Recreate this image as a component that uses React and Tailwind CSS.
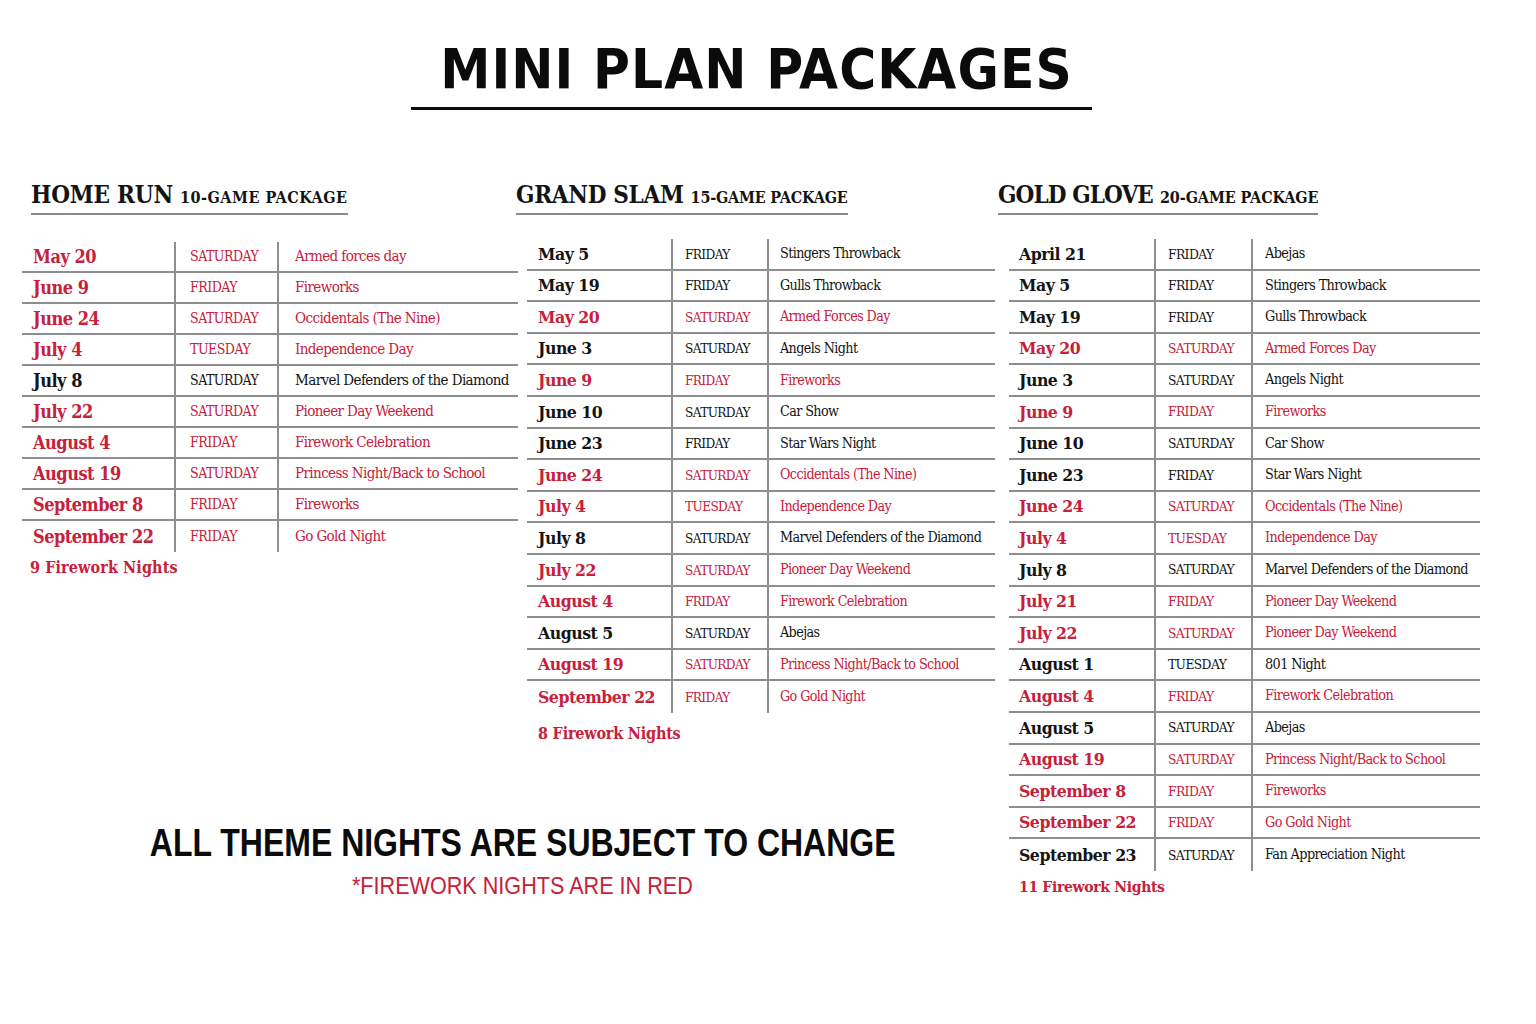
import React from "react";

const R = "r";
const B = "b";

const col1 = [
  ["May 20", "SATURDAY", "Armed forces day", R],
  ["June 9", "FRIDAY", "Fireworks", R],
  ["June 24", "SATURDAY", "Occidentals (The Nine)", R],
  ["July 4", "TUESDAY", "Independence Day", R],
  ["July 8", "SATURDAY", "Marvel Defenders of the Diamond", B],
  ["July 22", "SATURDAY", "Pioneer Day Weekend", R],
  ["August 4", "FRIDAY", "Firework Celebration", R],
  ["August 19", "SATURDAY", "Princess Night/Back to School", R],
  ["September 8", "FRIDAY", "Fireworks", R],
  ["September 22", "FRIDAY", "Go Gold Night", R],
];

const col2 = [
  ["May 5", "FRIDAY", "Stingers Throwback", B],
  ["May 19", "FRIDAY", "Gulls Throwback", B],
  ["May 20", "SATURDAY", "Armed Forces Day", R],
  ["June 3", "SATURDAY", "Angels Night", B],
  ["June 9", "FRIDAY", "Fireworks", R],
  ["June 10", "SATURDAY", "Car Show", B],
  ["June 23", "FRIDAY", "Star Wars Night", B],
  ["June 24", "SATURDAY", "Occidentals (The Nine)", R],
  ["July 4", "TUESDAY", "Independence Day", R],
  ["July 8", "SATURDAY", "Marvel Defenders of the Diamond", B],
  ["July 22", "SATURDAY", "Pioneer Day Weekend", R],
  ["August 4", "FRIDAY", "Firework Celebration", R],
  ["August 5", "SATURDAY", "Abejas", B],
  ["August 19", "SATURDAY", "Princess Night/Back to School", R],
  ["September 22", "FRIDAY", "Go Gold Night", R],
];

const col3 = [
  ["April 21", "FRIDAY", "Abejas", B],
  ["May 5", "FRIDAY", "Stingers Throwback", B],
  ["May 19", "FRIDAY", "Gulls Throwback", B],
  ["May 20", "SATURDAY", "Armed Forces Day", R],
  ["June 3", "SATURDAY", "Angels Night", B],
  ["June 9", "FRIDAY", "Fireworks", R],
  ["June 10", "SATURDAY", "Car Show", B],
  ["June 23", "FRIDAY", "Star Wars Night", B],
  ["June 24", "SATURDAY", "Occidentals (The Nine)", R],
  ["July 4", "TUESDAY", "Independence Day", R],
  ["July 8", "SATURDAY", "Marvel Defenders of the Diamond", B],
  ["July 21", "FRIDAY", "Pioneer Day Weekend", R],
  ["July 22", "SATURDAY", "Pioneer Day Weekend", R],
  ["August 1", "TUESDAY", "801 Night", B],
  ["August 4", "FRIDAY", "Firework Celebration", R],
  ["August 5", "SATURDAY", "Abejas", B],
  ["August 19", "SATURDAY", "Princess Night/Back to School", R],
  ["September 8", "FRIDAY", "Fireworks", R],
  ["September 22", "FRIDAY", "Go Gold Night", R],
  ["September 23", "SATURDAY", "Fan Appreciation Night", B],
];

const slab = "font-['DejaVu_Serif',serif] font-stretch-condensed";

function Heading({ big, small, className, bigTrack, smallTrack }) {
  return (
    <div className={className}>
      <div className={`inline-flex items-baseline gap-[7px] border-b-2 border-[#8a8a8a] pb-[3px] leading-[24px] text-[#141414] ${slab}`}>
        <span className={`text-[24px] font-bold ${bigTrack}`}>{big}</span>
        <span className={`text-[16px] font-bold ${smallTrack}`}>{small}</span>
      </div>
    </div>
  );
}

function Table({ rows, w1, w2, rowH, pl1, pl2, pl3, fDate, fDay, fEvent }) {
  return (
    <div className="flex flex-col">
      {rows.map((r, i) => {
        const color = r[3] === R ? "text-[#c6203a]" : "text-[#141414]";
        const last = i === rows.length - 1;
        return (
          <div
            key={i}
            className={`flex items-center ${last ? "" : "border-b-2 border-[#8e8e8e]"} ${rowH} ${color} ${slab}`}
          >
            <div className={`${w1} ${pl1} shrink-0 h-full flex items-center ${fDate} font-bold tracking-[-0.5px] whitespace-nowrap`}>
              {r[0]}
            </div>
            <div className={`${w2} ${pl2} shrink-0 h-full flex items-center border-l-2 border-[#8e8e8e] ${fDay} whitespace-nowrap`}>
              {r[1]}
            </div>
            <div className={`flex-1 min-w-0 ${pl3} h-full flex items-center border-l-2 border-[#8e8e8e] ${fEvent} whitespace-nowrap`}>
              {r[2]}
            </div>
          </div>
        );
      })}
    </div>
  );
}

function Nights({ children, className }) {
  return (
    <div className={`h-[20px] leading-[20px] font-bold text-[#c6203a] ${slab} ${className}`}>
      {children}
    </div>
  );
}

export default function App() {
  return (
    <div className="w-[1536px] h-[1024px] bg-white pt-[41px] overflow-hidden">
      <div className="ml-[411px] w-[681px] border-b-[3px] border-[#0d0d0d] pb-[10px] pl-[10px] text-center">
        <div className="text-[56px] leading-[56px] font-bold tracking-[1.1px] text-[#0b0b0b] font-['DejaVu_Sans',sans-serif] font-stretch-condensed">
          MINI PLAN PACKAGES
        </div>
      </div>

      <div className="mt-[73px] flex items-start pl-[22px]">
        <div className="flex flex-col">
          <div className="flex items-start">
            <div className="w-[496px] flex flex-col">
              <Heading big="HOME RUN" small="10-GAME PACKAGE" className="ml-[9px]" bigTrack="tracking-[-0.2px]" smallTrack="tracking-[0.5px]" />
              <div className="mt-[27px]">
                <Table
                  rows={col1}
                  w1="w-[152px]"
                  w2="w-[103px]"
                  rowH="h-[31px]"
                  pl1="pl-[11px]"
                  pl2="pl-[14px]"
                  pl3="pl-[16px]"
                  fDate="text-[18px]"
                  fDay="text-[14px] tracking-[-0.5px]"
                  fEvent="text-[15px] tracking-[-0.6px]"
                />
              </div>
              <Nights className="mt-[6px] ml-[8px] text-[16px] tracking-[0.1px]">9 Firework Nights</Nights>
            </div>
            <div className="ml-[9px] w-[468px] flex flex-col">
              <Heading big="GRAND SLAM" small="15-GAME PACKAGE" className="-ml-[11px]" bigTrack="tracking-[-0.3px]" smallTrack="tracking-[-0.2px]" />
              <div className="mt-[24px]">
                <Table
                  rows={col2}
                  w1="w-[144px]"
                  w2="w-[96px]"
                  rowH="h-[31.6px]"
                  pl1="pl-[11px]"
                  pl2="pl-[12px]"
                  pl3="pl-[11px]"
                  fDate="text-[17.5px]"
                  fDay="text-[13.5px] tracking-[-0.6px]"
                  fEvent="text-[14.2px] tracking-[-0.6px]"
                />
              </div>
              <Nights className="mt-[11px] ml-[11px] text-[16px] tracking-[-0.2px]">8 Firework Nights</Nights>
            </div>
          </div>
          <div className="mt-[79px] flex flex-col items-center pl-[28px] font-['Liberation_Sans',Arial,sans-serif]">
            <div className="inline-block scale-x-[0.82] text-[39px] leading-[39px] font-bold text-[#0b0b0b] whitespace-nowrap">
              ALL THEME NIGHTS ARE SUBJECT TO CHANGE
            </div>
            <div className="mt-[11px] inline-block scale-x-[0.9] text-[24px] leading-[25px] text-[#c6203a] whitespace-nowrap">
              *FIREWORK NIGHTS ARE IN RED
            </div>
          </div>
        </div>
        <div className="ml-[14px] w-[471px] flex flex-col">
          <Heading big="GOLD GLOVE" small="20-GAME PACKAGE" className="-ml-[11px]" bigTrack="tracking-[-0.9px]" smallTrack="tracking-[-0.1px]" />
          <div className="mt-[24px]">
            <Table
              rows={col3}
              w1="w-[145px]"
              w2="w-[97px]"
              rowH="h-[31.6px]"
              pl1="pl-[10px]"
              pl2="pl-[12px]"
              pl3="pl-[12px]"
              fDate="text-[17.5px]"
              fDay="text-[13.7px] tracking-[-0.6px]"
              fEvent="text-[14.3px] tracking-[-0.6px]"
            />
          </div>
          <Nights className="mt-[6px] ml-[10px] text-[15.5px] tracking-[-0.3px]">11 Firework Nights</Nights>
        </div>
      </div>
    </div>
  );
}
